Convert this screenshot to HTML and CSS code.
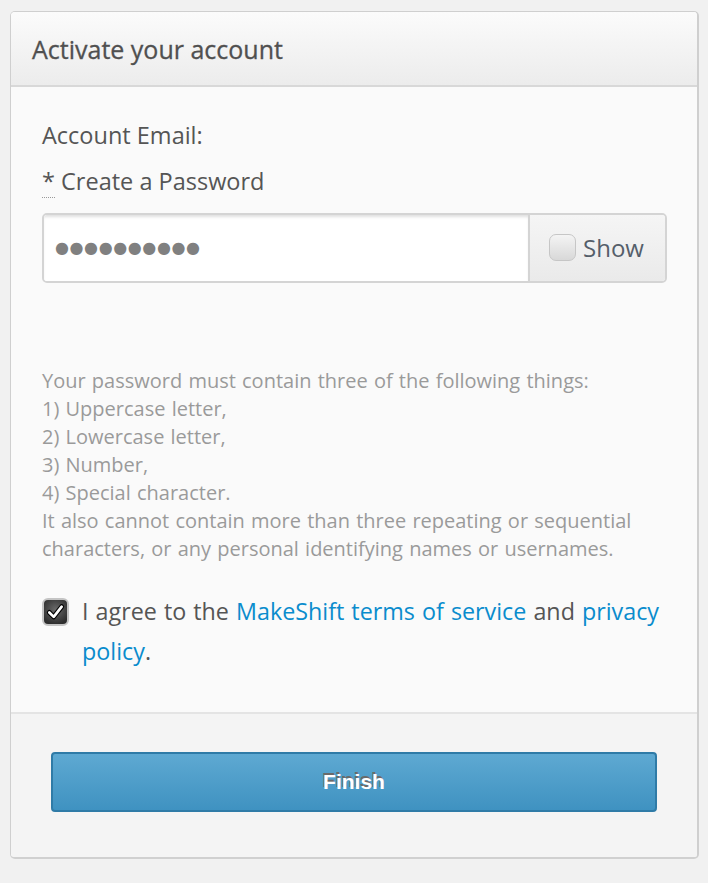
FILE: index.html
```html
<!DOCTYPE html>
<html>
<head>
<meta charset="utf-8">
<link rel="stylesheet" href="styles.css">
</head>
<body>
<div class="panel">
  <div class="panel-header"><h1 class="title">Activate your account</h1></div>
  <div class="panel-body">
    <div class="label">Account Email:</div>
    <div class="label label-pw"><abbr class="req">*</abbr> Create a Password</div>
    <div class="input-group">
      <div class="input">●●●●●●●●●●</div>
      <div class="addon"><span class="cb"></span><span class="show">Show</span></div>
    </div>
    <div class="help">
      Your password must contain three of the following things:<br>
      1) Uppercase letter,<br>
      2) Lowercase letter,<br>
      3) Number,<br>
      4) Special character.<br>
      It also cannot contain more than three repeating or sequential characters, or any personal identifying names or usernames.
    </div>
    <div class="agree">
      <span class="cb-checked"><svg viewBox="0 0 26 26" width="26" height="26"><path d="M6 13.5 L11 18.5 L20 7" fill="none" stroke="#000" stroke-width="5.5" stroke-linecap="round" stroke-linejoin="round"/><path d="M6 13.5 L11 18.5 L20 7" fill="none" stroke="#fff" stroke-width="3" stroke-linecap="round" stroke-linejoin="round"/></svg></span>
      <p class="agree-text">I agree to the <a href="#">MakeShift terms of service</a> and <a href="#">privacy policy</a>.</p>
    </div>
  </div>
  <div class="panel-footer">
    <button class="btn">Finish</button>
  </div>
</div>
</body>
</html>
```
FILE: styles.css
```css
html, body { margin: 0; padding: 0; }
body {
  background: #f1f1f1;
  font-family: "Open Sans", "DejaVu Sans", sans-serif;
  padding: 11px 10px 0 10px;
}
.panel {
  width: 686px;
  border: 1px solid #cfcfcf;
  border-right: 2px solid #cfcfcf;
  border-bottom: 2px solid #d0d0d0;
  border-radius: 5px;
  background: #fafafa;
  overflow: hidden;
}
.panel-header {
  height: 75px;
  box-sizing: border-box;
  background: linear-gradient(#fbfbfb, #ececec);
  border-bottom: 2px solid #d8d8d8;
  display: flex;
  align-items: center;
  padding: 0 21px;
}
.title {
  margin: 0;
  font-size: 25px;
  font-weight: 400;
  color: #505050;
  -webkit-text-stroke: 0.3px #505050;
}
.panel-body {
  padding: 33px 31px 41px 31px;
}
.label {
  font-size: 23.5px;
  line-height: 30px;
  color: #555;
  margin-bottom: 16px;
}
.label-pw { margin-bottom: 17px; }
.req {
  text-decoration: none;
  border-bottom: 1px dotted #999;
}
.input-group {
  display: flex;
  height: 70px;
  box-sizing: border-box;
  border: 2px solid #d4d4d4;
  border-radius: 5px;
  width: 625px;
  overflow: hidden;
}
.input {
  flex: 1;
  background: #fff;
  box-shadow: inset 0 3px 3px -1px #e0e0e0;
  border-right: 2px solid #d4d4d4;
  font-size: 16px;
  color: #808080;
  letter-spacing: 0.6px;
  display: flex;
  align-items: center;
  padding-left: 11px;
  padding-bottom: 2px;
}
.addon {
  width: 135px;
  background: linear-gradient(#f5f5f5, #eaeaea);
  display: flex;
  align-items: center;
  padding-left: 19px;
  box-sizing: border-box;
  padding-bottom: 2px;
}
.cb {
  width: 27px;
  height: 27px;
  border: 1px solid #c6c6c6;
  border-radius: 7px;
  box-sizing: border-box;
  background: linear-gradient(#f4f4f4, #d8d8d8);
  margin-right: 7px;
}
.show {
  font-size: 24px;
  color: #555e6a;
}
.help {
  margin-top: 84px;
  font-size: 20px;
  line-height: 28px;
  word-spacing: 1px;
  color: #9a9a9a;
}
.agree {
  display: flex;
  align-items: flex-start;
  margin-top: 28px;
}
.cb-checked {
  flex: none;
  width: 27px;
  height: 28px;
  border-radius: 6px;
  background: radial-gradient(circle at 50% 40%, #6a6a6a, #2e2e2e 80%);
  border: 2px solid #c4c4c4;
  box-sizing: border-box;
  margin-top: 7px;
  margin-right: 13px;
  display: flex;
  align-items: center;
  justify-content: center;
}
.cb-checked svg { width: 24px; height: 24px; }
.agree-text {
  margin: 0;
  font-size: 23.3px;
  line-height: 40px;
  word-spacing: 1px;
  color: #555;
}
.agree-text a {
  color: #0a8ccd;
  text-decoration: none;
}
.panel-footer {
  border-top: 2px solid #e4e4e4;
  background: #f4f4f4;
  padding: 38px 40px 45px 40px;
}
.btn {
  display: block;
  width: 606px;
  height: 60px;
  border: 2px solid #2f7ba7;
  border-radius: 4px;
  background: linear-gradient(#5ea9d2, #3f92c1);
  color: #fff;
  font-family: "Liberation Sans", Arial, sans-serif;
  font-weight: bold;
  font-size: 21px;
  text-shadow: -1px -2px 0 #6a6a6a;
  padding: 0;
}
```
